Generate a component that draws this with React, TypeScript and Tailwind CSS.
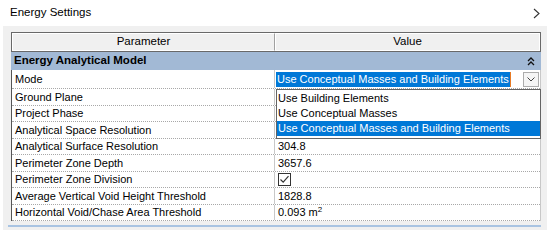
import React from 'react'

type Row = { label: string; value?: React.ReactNode }

const rows: Row[] = [
    { label: 'Ground Plane' },
    { label: 'Project Phase' },
    { label: 'Analytical Space Resolution' },
    { label: 'Analytical Surface Resolution', value: '304.8' },
    { label: 'Perimeter Zone Depth', value: '3657.6' },
    { label: 'Perimeter Zone Division', value: <CheckBox /> },
    { label: 'Average Vertical Void Height Threshold', value: '1828.8' },
    { label: 'Horizontal Void/Chase Area Threshold', value: <span>0.093 m<sup className='text-[8px]'>2</sup></span> },
]

function CheckBox() {
    return (
        <svg width='13' height='13' viewBox='0 0 13 13' className='mt-[1px]'>
            <rect x='0.5' y='0.5' width='12' height='12' fill='white' stroke='#333' />
            <path d='M2.5 6.5 L5.2 9.2 L10.5 3.2' fill='none' stroke='#333' strokeWidth='1.2' />
        </svg>
    )
}

function Dropdown() {
    const items = ['Use Building Elements', 'Use Conceptual Masses', 'Use Conceptual Masses and Building Elements']
    return (
        <div className='absolute left-[264px] top-[19px] w-[265px] bg-white border border-[#646464] pt-[1px] pb-[2px] z-10'>
            {items.map((it, i) => (
                <div key={it} className={'h-[15px] leading-[15px] pl-[1px] ' + (i === 2 ? 'bg-[#0078d7] text-white' : 'text-black')}>{it}</div>
            ))}
        </div>
    )
}

export default function App() {
    return (
        <div className='w-[550px] h-[234px] bg-white text-[11px] text-black overflow-hidden' style={{ fontFamily: '"Liberation Sans", Arial, sans-serif' }}>
            <div className='h-[26px] flex items-center justify-between pl-[10px] pr-[10px]'>
                <span className='text-[11.5px]'>Energy Settings</span>
                <svg width='7' height='11' viewBox='0 0 7 11'><path d='M1 1 L6 5.5 L1 10' fill='none' stroke='#333' strokeWidth='1.1' /></svg>
            </div>
            <div className='mx-[3px] bg-[#f0f0f0] pl-[8px] pr-[3px] pt-[6px] h-[204px]'>
                <div className='w-[530px] bg-white h-[189px] relative'>
                    {/* header */}
                    <div className='flex h-[20px] border border-[#696969] text-[11.5px]'>
                        <div className='w-[263px] flex items-center justify-center border border-white bg-[#f0f0f0] border-r-[#a0a0a0]'>Parameter</div>
                        <div className='flex-1 flex items-center justify-center border border-white bg-[#f0f0f0]'>Value</div>
                    </div>
                    {/* group */}
                    <div className='h-[18px] bg-[#a2b9d5] flex items-center justify-between pl-[3px] pr-[6px] font-bold text-[11.5px]'>
                        <span>Energy Analytical Model</span>
                        <svg width='8' height='9' viewBox='0 0 8 9'><path d='M1 4 L4 1 L7 4 M1 8 L4 5 L7 8' fill='none' stroke='#111' strokeWidth='1.3' /></svg>
                    </div>
                    <div className='border-l border-l-[#555] border-r border-r-[#c8c8c8] relative'>
                        {/* mode row */}
                        <div className='flex h-[19px] border-b border-dotted border-b-[#a8a8a8]'>
                            <div className='w-[263px] pl-[3px] flex items-center border-r border-r-[#c8c8c8]'>Mode</div>
                            <div className='flex-1 flex items-center pl-[1px] pr-[1px]'>
                                <span className='bg-[#0078d7] text-white h-[15px] leading-[15px] pl-[1px] pr-[1px] border-r border-r-[#e87a24]'>Use Conceptual Masses and Building Elements</span>
                                <span className='flex-1' />
                                <span className='w-[16px] h-[15px] border border-[#acacac] bg-[#f5f5f5] flex items-center justify-center'>
                                    <svg width='8' height='5' viewBox='0 0 8 5'><path d='M0.5 0.5 L4 4 L7.5 0.5' fill='none' stroke='#444' strokeWidth='1' /></svg>
                                </span>
                            </div>
                        </div>
                        {rows.map((r) => (
                            <div key={r.label} className='flex h-[16.5px] border-b border-dotted border-b-[#a8a8a8]'>
                                <div className='w-[263px] pl-[3px] flex items-center border-r border-r-[#c8c8c8]'>{r.label}</div>
                                <div className='flex-1 pl-[3px] flex items-center'>{r.value}</div>
                            </div>
                        ))}
                        <Dropdown />
                    </div>
                    <div className='absolute left-[-3px] right-0 bottom-[-6px] h-[2px] bg-[#a9c4e2]' />
                </div>
            </div>
        </div>
    )
}
